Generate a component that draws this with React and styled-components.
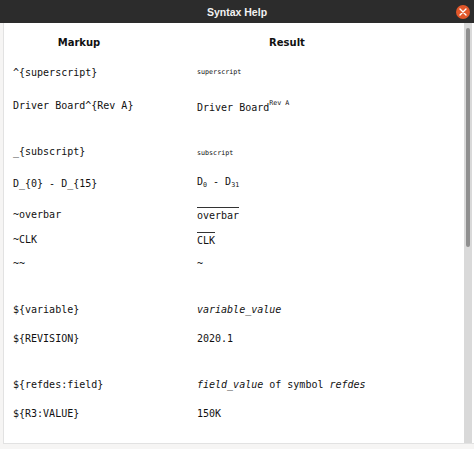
import React from 'react';
import styled, { createGlobalStyle } from 'styled-components';

const GlobalStyle = createGlobalStyle`
  html, body {
    margin: 0;
    padding: 0;
    background: #f6f5f4;
  }
`;

const getRows = () => [
  { gap: 10, markup: '^{superscript}', result: <Small $shift={2}>superscript</Small> },
  {
    gap: 11,
    markup: 'Driver Board^{Rev A}',
    result: (
      <>
        Driver Board<Sup>Rev A</Sup>
      </>
    ),
  },
  { gap: 28, markup: '_{subscript}', result: <Small $shift={-1}>subscript</Small> },
  {
    gap: 11,
    markup: 'D_{0} - D_{15}',
    result: (
      <>
        D<Sub>0</Sub> - D<Sub>31</Sub>
      </>
    ),
  },
  { gap: 13, markup: '~overbar', result: <Over>overbar</Over> },
  { gap: 5, markup: '~CLK', result: <Over>CLK</Over> },
  { gap: 4, markup: '~~', result: '~' },
  { gap: 26, markup: '${variable}', result: <Em>variable_value</Em> },
  { gap: 9, markup: '${REVISION}', result: '2020.1' },
  {
    gap: 26,
    markup: '${refdes:field}',
    result: (
      <>
        <Em>field_value</Em> of symbol <Em>refdes</Em>
      </>
    ),
  },
  { gap: 9, markup: '${R3:VALUE}', result: '150K' },
];

export default function App() {
  const rows = getRows();
  return (
    <>
      <GlobalStyle />
      <Window>
        <TitleBar>
          <Title>Syntax Help</Title>
          <CloseButton>
            <svg width="8" height="8" viewBox="0 0 8 8">
              <path d="M1 1 L7 7 M7 1 L1 7" stroke="#fff" strokeWidth="1.4" strokeLinecap="round" />
            </svg>
          </CloseButton>
        </TitleBar>
        <Body>
          <Pane>
            <Content>
              <HeaderRow>
                <HeadCell $width={132}>Markup</HeadCell>
                <HeadCell $width={180}>Result</HeadCell>
              </HeaderRow>
              {rows.map((r, i) => (
                <Row key={i} $gap={r.gap}>
                  <Cell>{r.markup}</Cell>
                  <Cell>{r.result}</Cell>
                </Row>
              ))}
            </Content>
            <Track>
              <Thumb />
            </Track>
          </Pane>
        </Body>
      </Window>
    </>
  );
}

const Window = styled.div`
  width: 474px;
  height: 449px;
  display: flex;
  flex-direction: column;
  background: #f6f5f4;
  overflow: hidden;
`;

const TitleBar = styled.div`
  height: 23px;
  flex: none;
  background: #2c2c2c;
  display: flex;
  align-items: center;
  justify-content: center;
  position: relative;
`;

const Title = styled.div`
  color: #f2f2f2;
  font-family: 'Liberation Sans', Arial, sans-serif;
  font-weight: bold;
  font-size: 10.5px;
  transform: scaleY(1.1);
`;

const CloseButton = styled.div`
  position: absolute;
  right: 4px;
  top: 5px;
  width: 14px;
  height: 14px;
  border-radius: 50%;
  background: #e2572a;
  display: flex;
  align-items: center;
  justify-content: center;
`;

const Body = styled.div`
  flex: 1;
  padding: 0 0 5px 3px;
  display: flex;
`;

const Pane = styled.div`
  flex: 1;
  display: flex;
  background: #fff;
  border-left: 1px solid #e2e2e2;
  border-bottom: 1px solid #e2e2e2;
`;

const Content = styled.div`
  flex: 1;
  padding: 9px 0 0 9px;
  font-family: 'DejaVu Sans Mono', monospace;
  font-size: 10px;
  color: #111;
`;

const HeaderRow = styled.div`
  display: grid;
  grid-template-columns: 184px 1fr;
  height: 20px;
  align-items: center;
`;

const HeadCell = styled.div`
  width: ${(p) => p.$width}px;
  text-align: center;
  font-family: 'DejaVu Sans', sans-serif;
  font-weight: bold;
  font-size: 10px;
`;

const Row = styled.div`
  display: grid;
  grid-template-columns: 184px 1fr;
  height: 20px;
  align-items: center;
  margin-top: ${(p) => p.$gap}px;
`;

const Cell = styled.div`
  white-space: pre;
  line-height: 20px;
`;

const Small = styled.span`
  font-size: 6.7px;
  vertical-align: ${(p) => p.$shift}px;
`;

const Sup = styled.sup`
  font-size: 6.7px;
  vertical-align: 6px;
`;

const Sub = styled.sub`
  font-size: 6.7px;
  vertical-align: -2px;
`;

const Over = styled.span`
  display: inline-block;
  border-top: 1px solid #333;
  line-height: 11px;
  padding-top: 2px;
  vertical-align: -1px;
`;

const Em = styled.i`
  font-style: italic;
`;

const Track = styled.div`
  width: 8px;
  margin-right: 2px;
  background: #d9d9d9;
  padding: 5px 2px 0 2px;
  box-sizing: border-box;
`;

const Thumb = styled.div`
  height: 219px;
  background: #8f8f8f;
  border-radius: 2px;
`;
